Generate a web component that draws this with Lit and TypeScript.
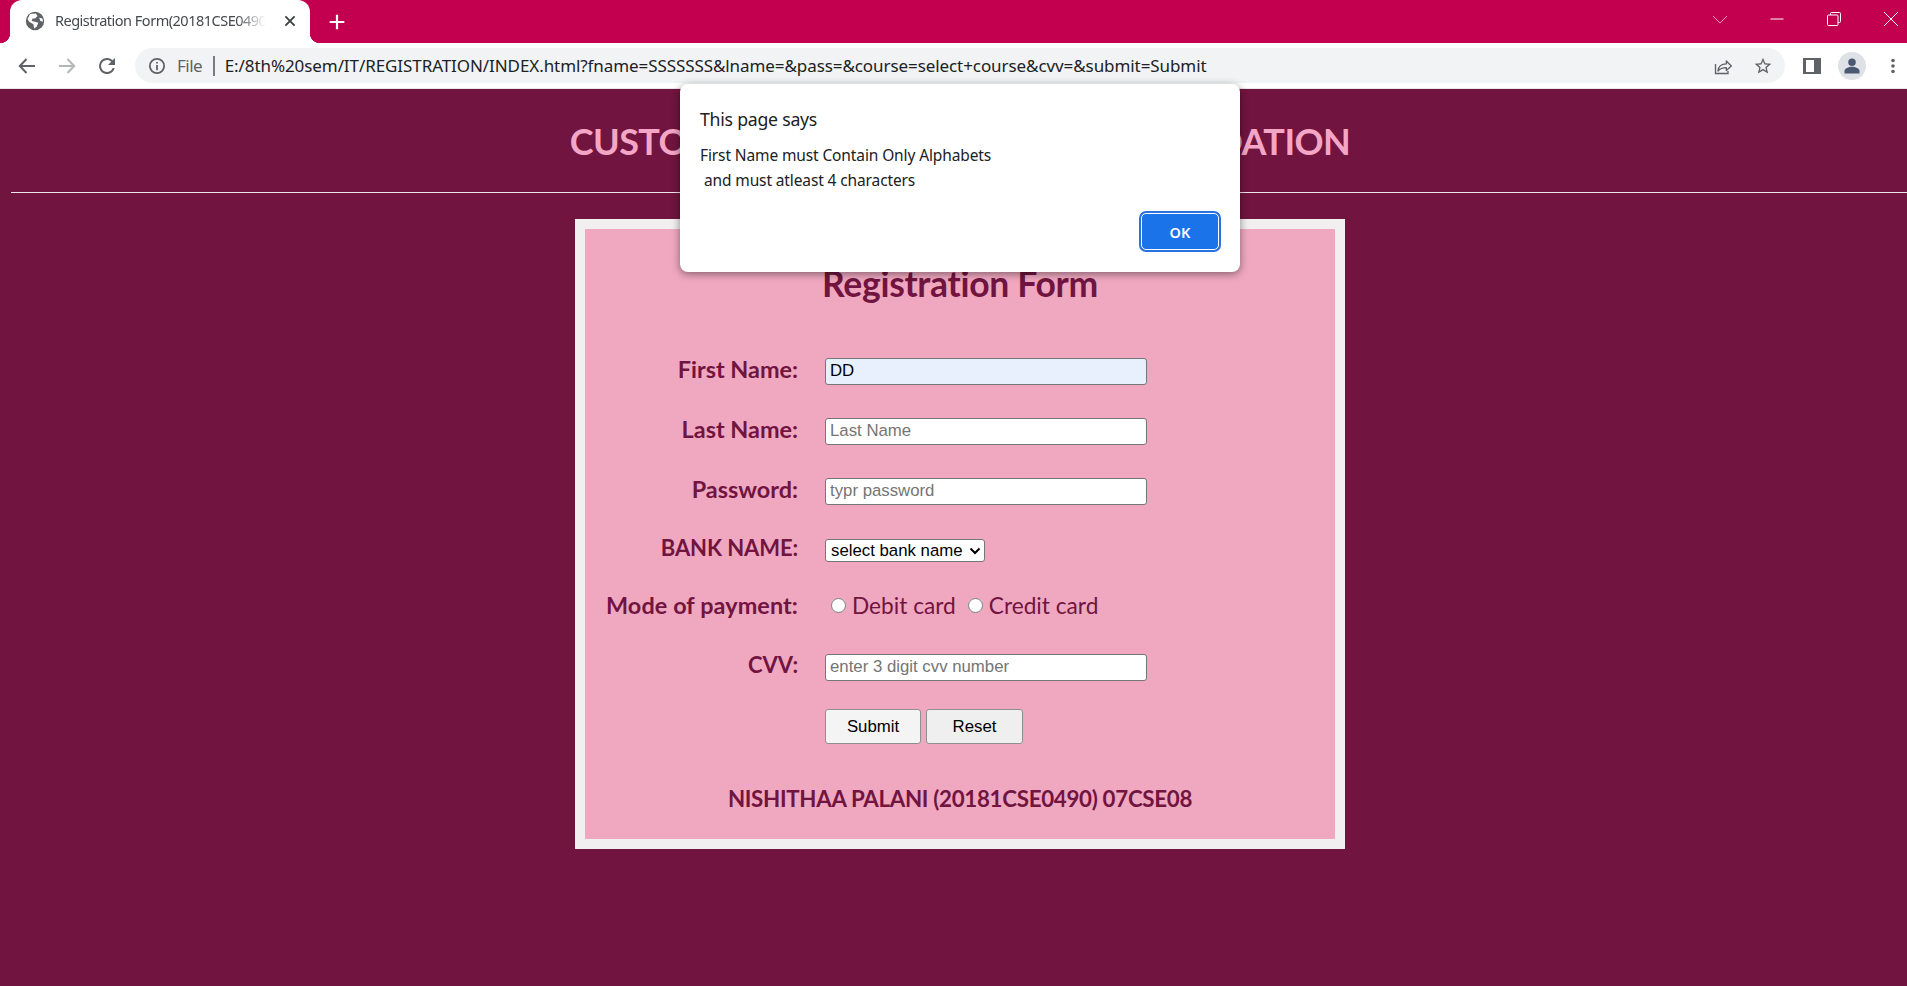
import { LitElement, html, css, svg } from "lit";
import { customElement } from "lit/decorators.js";

const ico = (size: number, body: unknown, vb = "0 0 24 24") =>
  html`<svg width=${size} height=${size} viewBox=${vb} fill="none">${body}</svg>`;

@customElement("app-root")
export class AppRoot extends LitElement {
  static styles = css`
    :host { display: block; position: relative; width: 1907px; height: 986px; overflow: hidden; background: #71143f; font-family: "Lato", sans-serif; }
    .tabbar { height: 43px; background: #c30050; display: flex; align-items: stretch; padding-left: 10px; }
    .tab { position: relative; width: 300px; background: #fff; border-radius: 12px 12px 0 0; display: flex; align-items: center; padding: 0 10px 2px 15px; box-sizing: border-box; }
    .tab::before, .tab::after { content: ""; position: absolute; bottom: 0; width: 10px; height: 10px; }
    .tab::before { left: -10px; background: radial-gradient(circle at 0 0, transparent 10px, #fff 10.5px); }
    .tab::after { right: -10px; background: radial-gradient(circle at 100% 0, transparent 10px, #fff 10.5px); }
    .favicon { width: 20px; height: 20px; flex: none; }
    .title { flex: 1; margin-left: 10px; padding-bottom: 2px; font: 14.5px "Noto Sans", sans-serif; letter-spacing: -0.5px; color: #45494d; white-space: nowrap; overflow: hidden; -webkit-mask-image: linear-gradient(90deg, #000 84%, transparent 97%); mask-image: linear-gradient(90deg, #000 84%, transparent 97%); }
    .tabx { margin-left: 8px; display: flex; }
    .plus { margin-left: 16px; display: flex; align-items: center; }
    .spacer { flex: 1; }
    .winctl { display: flex; align-items: center; padding-bottom: 6px; margin-right: -12px; }
    .winctl span { width: 57px; display: flex; justify-content: center; }
    .toolbar { height: 46px; background: #fff; display: flex; align-items: center; box-sizing: border-box; border-bottom: 1px solid #e8e8ea; }
    .nav { width: 40px; display: flex; justify-content: center; }
    .navs { display: flex; padding-left: 7px; }
    .omni { margin-left: 8px; width: 1650px; height: 35px; border-radius: 18px; background: #f1f3f4; display: flex; align-items: center; padding-left: 13px; box-sizing: border-box; }
    .file { margin-left: 11px; font: 17px "Noto Sans", sans-serif; color: #5f6368; letter-spacing: -0.5px; }
    .sep { width: 1.5px; height: 20px; background: #7a7d80; margin: 0 10px 0 11px; }
    .url { font: 17px "Noto Sans", sans-serif; color: #202124; letter-spacing: -0.08px; white-space: nowrap; }
    .omni-right { margin-left: auto; display: flex; align-items: center; gap: 20px; padding-right: 12px; }
    .tb-right { display: flex; align-items: center; }
    .panel { margin-left: 18px; display: flex; }
    .avatar { margin-left: 17px; width: 28px; height: 28px; border-radius: 50%; background: #dee1e6; display: flex; align-items: center; justify-content: center; }
    .dots { margin-left: 19px; display: flex; }

    h1 { margin: 0; height: 103px; padding-left: 13px; display: flex; align-items: center; justify-content: center; font: 700 36px "Lato", sans-serif; color: #f4a6c6; letter-spacing: -0.55px; box-sizing: border-box; }
    .rule { height: 1px; margin: 0 0 0 11px; background: #f0e6ea; border: none; }
    .card { width: 770px; height: 630px; margin: 26px 0 0 575px; box-sizing: border-box; border: 10px solid #f1eff0; background: #f0a8c1; color: #71143f; display: flex; flex-direction: column; }
    .card h2 { margin: 0; height: 112px; padding-top: 24px; box-sizing: border-box; font: 700 35.5px "Lato", sans-serif; text-align: center; letter-spacing: -0.3px; line-height: 62px; }
    .row { display: grid; grid-template-columns: 213px 1fr; column-gap: 27px; align-items: center; height: 60px; }
    .r-bank { height: 59px; } .r-mode { height: 52px; } .r-cvv { height: 70px; } .r-btn { height: 49px; }
    .row label.k { text-align: right; font: 700 23.4px "Lato", sans-serif; position: relative; top: -2px; white-space: nowrap; }
    .row label.caps { font-size: 22px; letter-spacing: -0.1px; top: -3px; }
    .r-mode label.k { top: -1px; letter-spacing: 0.1px; }
    input.txt { width: 322px; height: 27px; box-sizing: border-box; border: 1px solid #767676; border-radius: 3px; padding: 1px 4px; font: 16.8px "Liberation Sans", sans-serif; color: #000; background: #fff; outline: none; }
    input.txt::placeholder { color: #757575; }
    input.filled { background: #e8f0fe; }
    .sel { position: relative; width: 160px; height: 23px; display: flex; }
    select { appearance: none; width: 100%; height: 100%; box-sizing: border-box; border: 1px solid #767676; border-radius: 3px; background: #fff; font: 16.8px "Liberation Sans", sans-serif; color: #000; padding: 0 0 0 5px; }
    .chev { position: absolute; right: 4px; top: 6px; width: 12px; height: 12px; pointer-events: none; display: flex; }
    .radios { display: flex; align-items: center; font: 22.7px "Lato", sans-serif; margin-top: -2px; }
    .radios input { width: 15px; height: 15px; margin: 0 6px 0 6px; flex: none; }
    .radios span { margin-right: 6px; }
    .btns { display: flex; gap: 5px; }
    .btns button { width: 96px; height: 35px; box-sizing: border-box; border: 1px solid #8f8f8f; border-radius: 3px; background: #f4f4f4; font: 16.8px "Liberation Sans", sans-serif; color: #000; padding: 0; }
    .btns button + button { width: 97px; background: #efefef; }
    .foot { margin-top: 34px; text-align: center; font: 700 22.3px "Lato", sans-serif; letter-spacing: -0.3px; }

    .dialog { position: absolute; left: 680px; top: 84px; width: 560px; height: 188px; background: #fff; border-radius: 8px; box-shadow: 0 2px 8px rgba(0,0,0,.45); box-sizing: border-box; padding: 22px 20px 20px; color: #202124; display: flex; flex-direction: column; font-family: "Noto Sans", sans-serif; }
    .d-h { font-size: 17.7px; line-height: 26px; letter-spacing: -0.25px; }
    .d-m { margin-top: 11px; font-size: 15.5px; line-height: 25px; letter-spacing: -0.12px; white-space: pre; }
    .ok { position: absolute; right: 21px; top: 129px; width: 78px; height: 37px; box-sizing: border-box; background: #1a73e8; color: #fff; border: 1.5px solid #fff; border-radius: 5px; box-shadow: 0 0 0 2px #2a72e0; font: 600 14.5px "Noto Sans", sans-serif; padding: 0; }
  `;

  render() {
    const gray = "#5f6368";
    return html`
      <div class="tabbar">
        <div class="tab">
          <span class="favicon">${ico(20, svg`<circle cx="12" cy="12" r="11" fill="${gray}"/><path d="M6 3.5 L13 3 L15 6 L12 9 L9 9 L8 12 L12 13 L16 14 L14 19 L11 21 L10 16 L5 13 L3 10 Z M17 8 L21 9 L21.5 13 L18.5 12 Z" fill="#fff"/>`)}</span>
          <span class="title">Registration Form(20181CSE0490) 07CSE08</span>
          <span class="tabx">${ico(20, svg`<path d="M6.5 6.5l11 11M17.5 6.5l-11 11" stroke="#3c4043" stroke-width="2.2"/>`)}</span>
        </div>
        <span class="plus">${ico(22, svg`<path d="M12 4v16M4 12h16" stroke="#fff" stroke-width="2.4"/>`)}</span>
        <span class="spacer"></span>
        <div class="winctl">
          <span>${ico(16, svg`<path d="M1 5l7 7 7-7" stroke="#f29ac0" stroke-width="1"/>`, "0 0 16 16")}</span>
          <span>${ico(16, svg`<path d="M1.5 8h13" stroke="#fff" stroke-width="1"/>`, "0 0 16 16")}</span>
          <span>${ico(16, svg`<rect x="1.5" y="4" width="10.5" height="10.5" rx="1" stroke="#fff" stroke-width="1"/><path d="M4.5 4V2.5a1 1 0 0 1 1-1h8a1 1 0 0 1 1 1v8a1 1 0 0 1-1 1H12" stroke="#fff" stroke-width="1"/>`, "0 0 16 16")}</span>
          <span>${ico(16, svg`<path d="M1 1l14 14M15 1L1 15" stroke="#fff" stroke-width="1"/>`, "0 0 16 16")}</span>
        </div>
      </div>
      <div class="toolbar">
        <div class="navs">
          <span class="nav">${ico(24, svg`<path d="M20 12H5M11.5 5L4.8 12l6.7 7" stroke="${gray}" stroke-width="2"/>`)}</span>
          <span class="nav">${ico(24, svg`<path d="M4 12h15M12.5 5l6.7 7-6.7 7" stroke="#b4b6b9" stroke-width="2"/>`)}</span>
          <span class="nav">${ico(24, svg`<path d="M17.65 6.35A7.96 7.96 0 0 0 12 4a8 8 0 1 0 7.73 10h-2.08A6 6 0 1 1 12 6c1.66 0 3.14.69 4.22 1.78L13 11h7V4l-2.35 2.35z" fill="${gray}"/>`)}</span>
        </div>
        <div class="omni">
          ${ico(18, svg`<circle cx="12" cy="12" r="9.5" stroke="${gray}" stroke-width="2.4"/><path d="M12 10.5v7M12 6.5v2.2" stroke="${gray}" stroke-width="2.4"/>`)}
          <span class="file">File</span><span class="sep"></span>
          <span class="url">E:/8th%20sem/IT/REGISTRATION/INDEX.html?fname=SSSSSSS&amp;lname=&amp;pass=&amp;course=select+course&amp;cvv=&amp;submit=Submit</span>
          <div class="omni-right">
            ${ico(20, svg`<path d="M3 9.5V21h15v-3" stroke="${gray}" stroke-width="1.6"/><path d="M6 18c.5-5 4-8.5 10-8.5V6l6 6-6 5.5V14c-4 0-7.5 1-10 4z" stroke="${gray}" stroke-width="1.6" stroke-linejoin="round"/>`)}
            ${ico(20, svg`<path d="M22 9.24l-7.19-.62L12 2 9.19 8.63 2 9.24l5.46 4.73L5.82 21 12 17.27 18.18 21l-1.63-7.03L22 9.24zM12 15.4l-3.76 2.27 1-4.28-3.32-2.88 4.38-.38L12 6.1l1.71 4.04 4.38.38-3.32 2.88 1 4.28L12 15.4z" fill="${gray}"/>`)}
          </div>
        </div>
        <div class="tb-right">
          <span class="panel">${ico(18, svg`<path d="M0 0h18v16H0z M3 2v12h8V2z" fill="${gray}" fill-rule="evenodd"/>`, "0 0 18 16")}</span>
          <span class="avatar">${ico(20, svg`<circle cx="12" cy="7.5" r="4.5" fill="#4a5872"/><path d="M3 21v-3c0-3 5-5 9-5s9 2 9 5v3z" fill="#4a5872"/>`)}</span>
          <span class="dots">${ico(16, svg`<circle cx="8" cy="2.5" r="1.8" fill="${gray}"/><circle cx="8" cy="8" r="1.8" fill="${gray}"/><circle cx="8" cy="13.5" r="1.8" fill="${gray}"/>`, "0 0 16 16")}</span>
        </div>
      </div>
      <h1>CUSTOMER REGISTRATION FORM VALIDATION</h1>
      <hr class="rule" />
      <form class="card" @submit=${(e: Event) => e.preventDefault()}>
        <h2>Registration Form</h2>
        <div class="row"><label class="k">First Name:</label><input class="txt filled" value="DD" /></div>
        <div class="row"><label class="k">Last Name:</label><input class="txt" placeholder="Last Name" /></div>
        <div class="row"><label class="k">Password:</label><input class="txt" placeholder="typr password" /></div>
        <div class="row r-bank"><label class="k caps">BANK NAME:</label><div class="sel"><select><option>select bank name</option></select><span class="chev">${ico(12, svg`<path d="M1.5 3.5 L6 8 L10.5 3.5" stroke="#000" stroke-width="2"/>`, "0 0 12 12")}</span></div></div>
        <div class="row r-mode"><label class="k">Mode of payment:</label>
          <div class="radios"><input type="radio" name="m" /><span>Debit card</span><input type="radio" name="m" /><span>Credit card</span></div></div>
        <div class="row r-cvv"><label class="k caps">CVV:</label><input class="txt" placeholder="enter 3 digit cvv number" /></div>
        <div class="row r-btn"><span></span><div class="btns"><button>Submit</button><button type="button">Reset</button></div></div>
        <div class="foot">NISHITHAA PALANI (20181CSE0490) 07CSE08</div>
      </form>
      <div class="dialog">
        <div class="d-h">This page says</div>
        <div class="d-m">First Name must Contain Only Alphabets
 and must atleast 4 characters</div>
        <button class="ok">OK</button>
      </div>
    `;
  }
}
